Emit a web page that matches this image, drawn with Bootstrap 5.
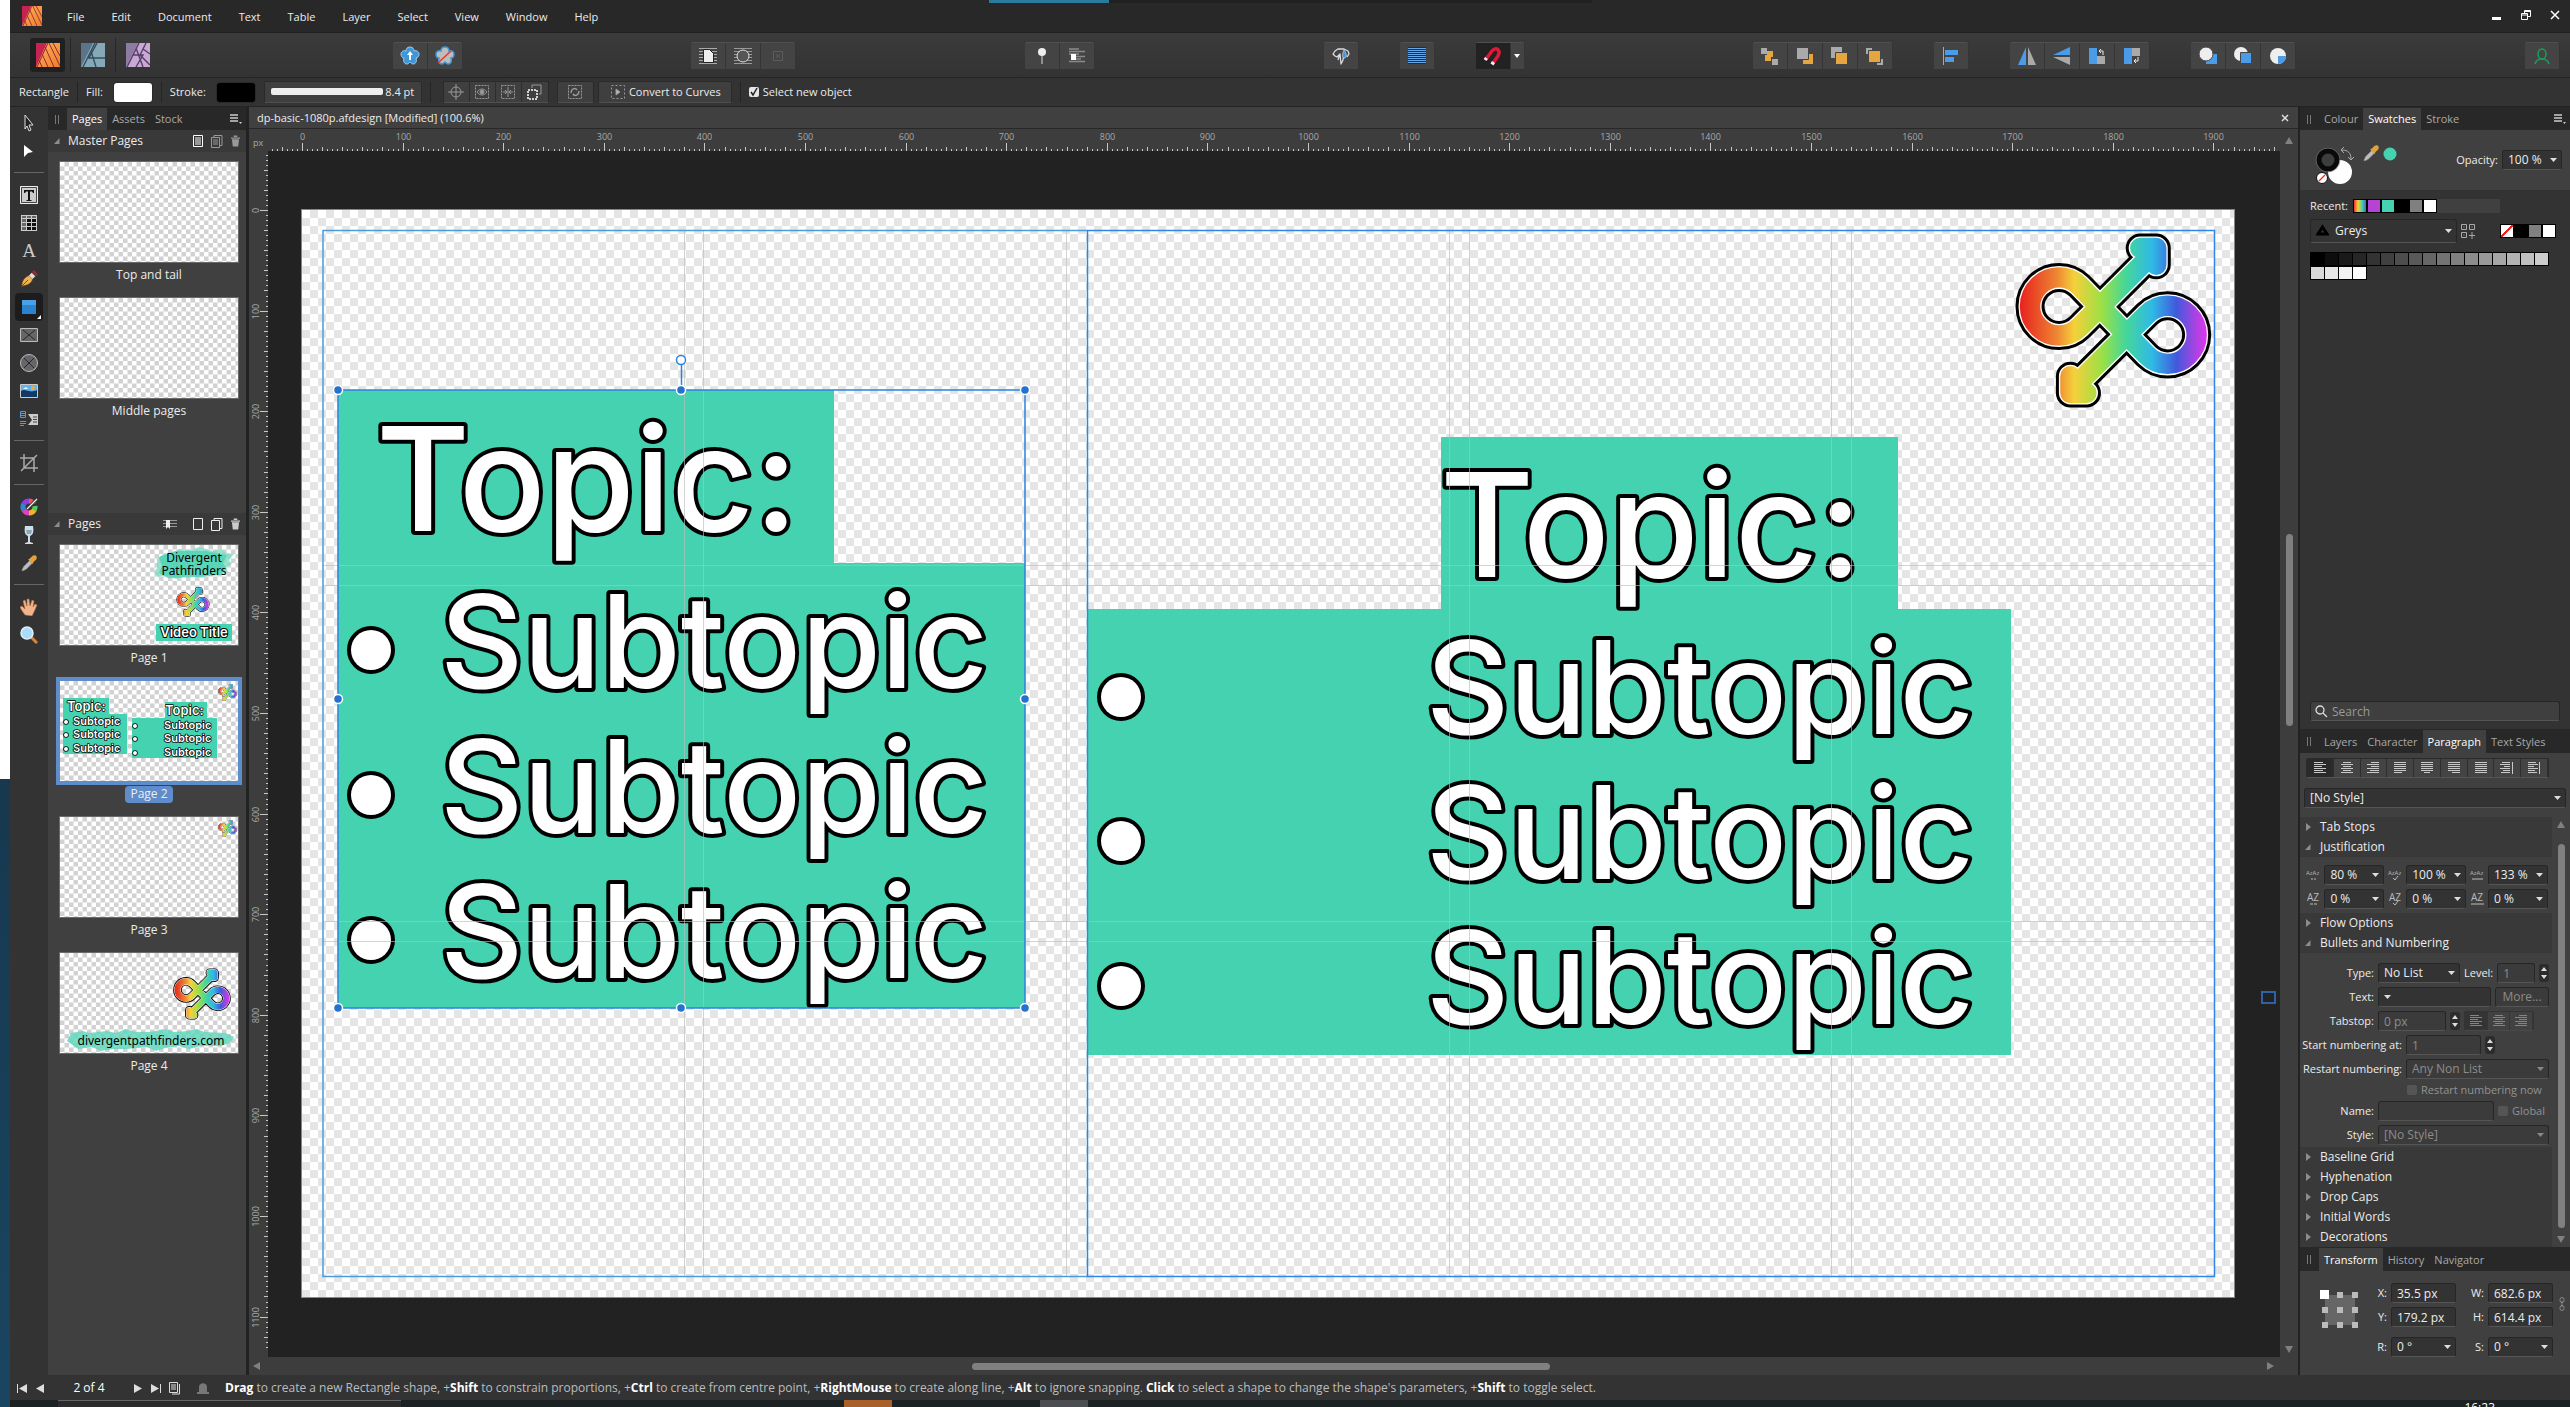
<!DOCTYPE html>
<html lang="en">
<head>
<meta charset="utf-8">
<meta name="viewport" content="width=device-width, initial-scale=1">
<title>dp-basic-1080p.afdesign</title>
<link rel="stylesheet" href="https://cdn.jsdelivr.net/npm/bootstrap@5.3.0/dist/css/bootstrap.min.css">
<style>
:root{--bar:#333;--panel:#404040;--dark:#282828;--edge:#262626;--txt:#ececec;--dim:#a8a8a8;--teal:#45d2b1}
body{font-family:"Open Sans","Noto Sans",sans-serif;font-size:12px;line-height:16px;color:var(--txt);background:#222;overflow:hidden}
svg{display:block;flex:none}
button{font:inherit;color:inherit;background:none;border:0;padding:0;display:flex;align-items:center;justify-content:center}
.desk{width:10px;background:linear-gradient(#fff 779px,#17384f 779px,#1a4560)}
.titlebar{height:33px;background:var(--dark);border-bottom:1px solid #202020;padding:0 10px 0 12px}
.titlebar a{color:var(--txt);text-decoration:none}
.menus{gap:27px;margin-left:25px;font-size:11px;padding-top:2px}
.winbtns{gap:19px;padding-bottom:2px}
.topstrip{top:0;left:989px;width:603px;height:3px;background:#202020}
.topstrip i{display:block;width:120px;height:3px;background:#2a7b9b}
.toolbar{height:45px;background:linear-gradient(#3b3b3b,#333);border-bottom:1px solid #242424;padding:0 11px 0 20px}
.persona{width:35px;height:34px;border-radius:3px}
.persona.on{background:#202020}
.vsep{width:1px;height:34px;background:#262626;margin:0 4px 0 5px}
.gap42{width:42px}
.tgroup{background:#444;border-top:1px solid #505050;border-radius:2px;height:27px;gap:1px}
.tgroup button{width:34px;height:26px;background:#444;box-shadow:1px 0 0 #353535}
.tgroup .narrow{width:13px}
.tgroup .held{background:#222}
.ctx{height:29px;background:var(--bar);border-bottom:1px solid #242424;padding:0 9px;font-size:11px}
.csep{width:1px;height:20px;background:#242424}
.chip{width:38px;height:19px;border-radius:3px;box-shadow:0 0 0 1px #2a2a2a;margin:0 9px 0 11px}
.cgroup{height:22px;background:#3f3f3f;border:1px solid #2a2a2a;border-bottom-color:#505050;border-radius:2px}
.cgroup button{width:26px;border-right:1px solid #2e2e2e}
.cgroup button:last-child{border-right:0}
.strokebox{width:158px;gap:2px}
.cyc{width:37px}.cyc button{width:35px}
.conv{width:134px;gap:2px}
input[type=checkbox].tick{appearance:none;width:10px;height:10px;background:#555;border-radius:2px;margin:0;flex:none}
input[type=checkbox].tick:checked{background:#e6e6e6}
.tickbox{position:relative}
.tickbox svg{position:absolute;left:1px;top:0;pointer-events:none}
.tools{width:38px;background:var(--bar);padding-top:2px}
.tools button{height:28px;width:28px;border-radius:4px}
.tools button.on{background:#1c1c1c;position:relative}
.tools hr{width:30px;margin:7px 0 8px;border:0;border-top:1px solid #666;opacity:1}
.side{width:198px;background:var(--panel)}
.tabsrow{height:23px;background:var(--dark);padding:1px 4px 0 7px;color:var(--dim);font-size:11px}
.tabsrow.tall{height:24px}
.tabsrow .grip{width:4px;height:9px;border-left:1px solid #777;border-right:1px solid #777;margin-right:8px}
.tabsrow button{padding:0 5px;height:22px}
.tabsrow.tall button{height:23px}
.tabsrow button.on{background:var(--panel);color:#fff}
.phead{height:22px;background:#393939;padding:0 6px 0 6px}
.pagelist{display:flex;flex-direction:column;gap:13px;padding:9px 0 0 4px}
.masters{height:361px}
.thumb{width:180px;height:102px;border:1px solid #6a6a6a}
.pg{margin:0 auto;text-align:center;width:186px}
.pg figcaption{height:17px;line-height:16px;margin-top:4px;font-size:12px}
.pg.chosen .thumb{border-color:#5f8ccb;box-shadow:0 0 0 3px #5f8ccb}
.pg.chosen figcaption span{background:#5f8ccb;border-radius:4px;padding:0 5px 1px;display:inline-block}
.docarea{background:#3d3d3d;margin:0 2px 0 3px;min-width:0}
.doctab{height:22px;background:#404040;border-bottom:1px solid #282828;padding:0 9px 0 8px;font-size:11px}
.viewport{background:#222;overflow:hidden}
.artboard{position:absolute;left:34px;top:59px}
.offpage{position:absolute;right:4px;top:840px;width:15px;height:13px;border:2px solid #2b62a8}
.hruler{height:22px;overflow:hidden}
.vruler{width:19px;overflow:hidden}
.ruler text{fill:#a9a9a9;font-size:9px;font-family:"Open Sans",sans-serif}
.ruler path{stroke:#c8c8c8;fill:none}
.vscroll{width:18px}
.hscroll{height:18px}
.thumbbar{background:#808080;border-radius:4px}
.right{width:270px;background:var(--panel)}
.right label,.recent{font-size:11px}
.fld,.pick{background-color:#333;border:1px solid #262626;border-bottom-color:#555;border-radius:3px;color:var(--txt);font:inherit;height:20px;padding:0 5px;min-width:0;width:100%}
.fld:disabled,.pick:disabled{color:#8c8c8c;background-color:#3b3b3b;opacity:1}
.fld::placeholder{color:#9a9a9a;opacity:1}
.pick{appearance:none;background-repeat:no-repeat;background-position:right 4px center;background-size:7px 4px;background-image:url("data:image/svg+xml,%3Csvg xmlns='http://www.w3.org/2000/svg' viewBox='0 0 7 4'%3E%3Cpath d='M0 0h7L3.5 4z' fill='%23ddd'/%3E%3C/svg%3E")}
.pick:disabled{background-image:url("data:image/svg+xml,%3Csvg xmlns='http://www.w3.org/2000/svg' viewBox='0 0 7 4'%3E%3Cpath d='M0 0h7L3.5 4z' fill='%23888'/%3E%3C/svg%3E")}
.w60{width:60px}.w65{width:65px}
.swarea{background:var(--bar);padding:8px 10px 0}
.sw{width:14px;height:14px;border:1px solid #000;flex:none}
.swgrid{width:239px;padding-left:1px;margin-top:8px}
.swgrid .sw{margin-left:-1px;width:15px}
.recentrow{width:147px;background:#404040;margin-right:60px}
.agroup{border:1px solid #2a2a2a;border-bottom-color:#555;border-radius:2px;height:20px;width:243px}
.agroup.main{margin:5px 0 0 6px}
.agroup button{flex:1;border-right:1px solid #2e2e2e;background:#444}
.agroup button.on{background:#2a2a2a}
.stylerow{padding:10px 4px 9px}
.sec{height:20px;background:#393939;padding-left:5px;width:100%;justify-content:flex-start}
.sec svg{margin-right:9px}
.form-line{height:24px;gap:4px;padding-right:3px}
.lb{width:74px;text-align:right;flex:none}
.lb2{width:102px;text-align:right;flex:none;white-space:nowrap}
.lx{width:27px;text-align:right}.lw{width:24px;text-align:right}
.spin{width:10px;height:18px;flex:none;background:#2c2c2c;border-radius:3px}
.muted{color:#929292}
.status{height:25px;background:var(--bar);color:#bdbdbd;padding:1px 0 0 7px}
.status b{color:#fff}
.taskbar{height:7px;background:#1c2124;overflow:hidden}
</style>
</head>
<body class="vh-100 d-flex">
<svg width="0" height="0" class="position-absolute">
 <defs>
  <linearGradient id="rb" gradientUnits="userSpaceOnUse" x1="90" y1="0" x2="648" y2="0"><stop offset="0" stop-color="#e8221f"/><stop offset=".2" stop-color="#ee8733"/><stop offset=".29" stop-color="#f5d03a"/><stop offset=".44" stop-color="#9be046"/><stop offset=".57" stop-color="#45d69b"/><stop offset=".71" stop-color="#2fb9e6"/><stop offset=".84" stop-color="#4159dd"/><stop offset=".92" stop-color="#9448e0"/><stop offset="1" stop-color="#e035ec"/></linearGradient>
  <path id="knot" d="M450 98H498V148M498 98V105L268.5 334.5A87 87 0 1 1 268.5 211.5L470.5 419.5A87 87 0 1 0 470.5 296.5L241 525V532M289 532H241V482"/>
  <symbol id="logo" viewBox="75 50 590 530"><g fill="none" stroke-linecap="round" stroke-linejoin="round"><use href="#knot" stroke="#000" stroke-width="87"/><use href="#knot" stroke="#fff" stroke-width="69"/><use href="#knot" stroke="url(#rb)" stroke-width="61"/></g></symbol>
  <pattern id="chk" width="16" height="16" patternUnits="userSpaceOnUse"><path fill="#fff" d="M0 0h16v16H0z"/><path fill="#e5e5e5" d="M8 0h8v8H8zM0 8h8v8H0z"/></pattern>
  <pattern id="chs" width="9" height="9" patternUnits="userSpaceOnUse"><path fill="#fff" d="M0 0h9v9H0z"/><path fill="#d2d2d2" d="M4.500 0H9v4.500H4.500zM0 4.500h4.500V9H0z"/></pattern>
  <linearGradient id="og" x1="0" y1="0" x2="1" y2="1"><stop stop-color="#ffb35c"/><stop offset="1" stop-color="#f07c2c"/></linearGradient>
  <symbol id="pub" viewBox="0 0 24 24"><path fill="url(#og)" d="M0 0h24v24H0z"/><path fill="#c4244f" d="M0 0h11L0 24z"/><path stroke="#8e2b33" fill="none" d="M9 4l9 20M6 11l6 13M13 0l11 23M17 0l7 13M3 17l3 7M12 0L1 24"/></symbol>
  <symbol id="des" viewBox="0 0 24 24"><path fill="#86a9b8" d="M0 0h24v24H0z"/><path fill="#5a7489" d="M0 0h12L0 24z"/><path stroke="#334f60" stroke-width="1.4" fill="none" d="M14 0L2 24M10 8l5 16M24 15H7M16 0L8 15"/></symbol>
  <symbol id="pho" viewBox="0 0 24 24"><path fill="#c9a8d2" d="M0 0h24v24H0z"/><path fill="#8d7ba3" d="M0 0h12L0 24z"/><path stroke="#55406b" stroke-width="1.4" fill="none" d="M13 0L1 24M7 12h10l-7 12M10 5l7 19M20 0l-6 12 10 10M17 6l7 5"/></symbol>
  <symbol id="flower" viewBox="0 0 20 20"><path d="M10 1c3 0 4 2 4 4 3-1 5 1 5 3s-1 4-3 4c1 3 0 6-3 6-1 0-2-1-3-2-1 1-2 2-3 2-3 0-4-3-3-6-2 0-3-2-3-4s2-4 5-3c0-2 1-4 4-4z"/></symbol>
  <symbol id="pen" viewBox="0 0 20 20"><path fill="#f0b352" stroke="#6e4415" stroke-width=".7" d="M2 18c0-6 3-10 8-12l4 4c-1 5-6 7-12 8z"/><path stroke="#6e4415" d="M2 18l7-7"/><path fill="#ddd" d="M10 6l3-3 4 4-3 3z"/><path fill="#8d2f2a" d="M13 2l3-2 4 5-2 2z"/></symbol>
  <symbol id="dropper" viewBox="0 0 20 20"><path fill="#bdbdbd" stroke="#777" stroke-width=".6" d="M2 18l2-4 7-7 3 3-7 7-4 2z"/><path fill="#e3a33c" d="M9 6l2-1 3-3c3-2 6 1 4 4l-3 3-1 2z"/></symbol>
  <symbol id="trash" viewBox="0 0 10 12"><path fill="currentColor" d="M0 2h10v1.500H0zM3 0h4v1.500H3zM1 4h8l-1 8H2z"/></symbol>
  <symbol id="burger" viewBox="0 0 12 10"><path stroke="#ccc" stroke-width="1.500" d="M0 1h8M0 4h8M0 7h8"/><path fill="#ccc" d="M9 8h3l-1.500 2z"/></symbol>
  <symbol id="open" viewBox="0 0 6 8"><path fill="#8d8d8d" d="M5.500 1v6H0z"/></symbol>
  <symbol id="shut" viewBox="0 0 6 8"><path fill="#8d8d8d" d="M1 0l5 4-5 4z"/></symbol>
  <symbol id="spn" viewBox="0 0 10 18"><path fill="#ddd" d="M2 7l3-4 3 4zM2 11h6l-3 4z"/></symbol>
  <symbol id="al" viewBox="0 0 14 12"><path stroke="#c9c9c9" d="M1 .5h9M1 2.500h12M1 4.500h8M1 6.500h12M1 8.500h9M1 10.500h12"/></symbol>
  <symbol id="ac" viewBox="0 0 14 12"><path stroke="#c9c9c9" d="M3 .5h8M1 2.500h12M3 4.500h8M1 6.500h12M3 8.500h8M1 10.500h12"/></symbol>
  <symbol id="ar" viewBox="0 0 14 12"><path stroke="#c9c9c9" d="M5 .5h8M1 2.500h12M5 4.500h8M1 6.500h12M4 8.500h9M1 10.500h12"/></symbol>
  <symbol id="aj" viewBox="0 0 14 12"><path stroke="#c9c9c9" d="M1 .5h12M1 2.500h12M1 4.500h12M1 6.500h12M1 8.500h12M1 10.500h12"/></symbol>
  <symbol id="aj1" viewBox="0 0 14 12"><path stroke="#c9c9c9" d="M1 .5h12M1 2.500h12M1 4.500h12M1 6.500h12M1 8.500h12M1 10.500h8"/></symbol>
  <symbol id="aj2" viewBox="0 0 14 12"><path stroke="#c9c9c9" d="M1 .5h12M1 2.500h12M1 4.500h12M1 6.500h12M1 8.500h12M4 10.500h6"/></symbol>
  <symbol id="aj3" viewBox="0 0 14 12"><path stroke="#c9c9c9" d="M1 .5h12M1 2.500h12M1 4.500h12M1 6.500h12M1 8.500h12M5 10.500h8"/></symbol>
  <symbol id="ax" viewBox="0 0 14 12"><path stroke="#c9c9c9" d="M2 .5h8M0 2.500h10M4 4.500h6M0 6.500h10M3 8.500h7M1 10.500h9M12.500 0v12"/></symbol>
  <symbol id="ay" viewBox="0 0 14 12"><path stroke="#c9c9c9" d="M1 .5h8M1 2.500h10M1 4.500h6M1 6.500h10M1 8.500h7M1 10.500h9M12.500 0v12"/></symbol>
 </defs>
</svg>

<div class="desk flex-shrink-0"></div>
<div class="d-flex flex-column flex-grow-1 overflow-hidden">
 <div class="position-absolute topstrip"><i></i></div>
 <header class="titlebar d-flex align-items-center flex-shrink-0">
  <svg width="20" height="20"><use href="#pub"/></svg>
  <nav class="d-flex menus"><a href="#">File</a><a href="#">Edit</a><a href="#">Document</a><a href="#">Text</a><a href="#">Table</a><a href="#">Layer</a><a href="#">Select</a><a href="#">View</a><a href="#">Window</a><a href="#">Help</a></nav>
  <div class="d-flex ms-auto winbtns">
   <button aria-label="Minimise"><svg width="10" height="12"><path fill="#fff" d="M0 8h9v3H0z"/></svg></button>
   <button aria-label="Restore"><svg width="10" height="10" fill="none" stroke="#fff"><path d="M.5 3.500h6v6h-6zM.5 5h6M3.500 3V.5h6v6H7M3.500 1.500h6"/></svg></button>
   <button aria-label="Close"><svg width="10" height="10" stroke="#fff" stroke-width="1.500"><path d="M1 1l8 8M9 1l-8 8"/></svg></button>
  </div>
 </header>

 <div class="toolbar d-flex align-items-center flex-shrink-0">
  <button class="persona on" aria-label="Publisher"><svg width="24" height="24"><use href="#pub"/></svg></button><span class="vsep"></span>
  <button class="persona" aria-label="Designer"><svg width="24" height="24"><use href="#des"/></svg></button><span class="vsep"></span>
  <button class="persona me-2" aria-label="Photo"><svg width="24" height="24"><use href="#pho"/></svg></button>
  <span class="flex-fill"></span>
  <div class="tgroup d-flex"><button aria-label="Synchronise defaults"><svg width="20" height="20"><use href="#flower" fill="#3d97d8" stroke="#9ccdf0"/><path fill="#fff" d="M10 5l3 4h-2v5H9V9H7z"/></svg></button><button aria-label="Revert defaults"><svg width="20" height="20"><use href="#flower" fill="#bdbdbd" stroke="#3d97d8" stroke-width="1.500"/><path stroke="#e33" stroke-width="1.500" d="M3 17L16 5"/></svg></button></div>
  <span class="flex-fill"></span>
  <div class="tgroup d-flex"><button aria-label="Wrap"><svg width="18" height="18"><path stroke="#aaa" d="M0 1.500h18M0 4.500h18M0 7.500h18M0 10.500h18M0 13.500h18M0 16.500h18"/><path fill="#eee" stroke="#222" d="M4.500 2.500h6l4 4v9h-10z"/></svg></button><button aria-label="Wrap outline"><svg width="18" height="18"><path stroke="#999" d="M0 1.500h18M0 4.500h18M0 7.500h18M0 10.500h18M0 13.500h18M0 16.500h18"/><circle cx="9" cy="9" r="6" fill="#555" stroke="#ddd"/></svg></button><button aria-label="Wrap off" disabled><svg width="18" height="18" fill="none" stroke="#5c5c5c"><path d="M4.500 4.500h9v9h-9zM7 7l4 4M11 7l-4 4"/></svg></button></div>
  <span class="flex-fill"></span>
  <div class="tgroup d-flex"><button aria-label="Pin"><svg width="10" height="16"><circle cx="5" cy="4" r="4" fill="#eee"/><path stroke="#ddd" d="M5 7v9"/></svg></button><button aria-label="Float"><svg width="18" height="16"><path stroke="#8a8a8a" stroke-width="1.300" d="M1 1h10M1 3.500h16M1 6h10M8 8.500h9M8 11h5M1 13.500h16"/><path fill="#fff" d="M3 6h5v6H3z"/></svg></button></div>
  <span class="flex-fill"></span>
  <div class="tgroup d-flex"><button aria-label="Preview"><svg width="18" height="18" fill="none"><path stroke="#ddd" stroke-width="1.300" stroke-linejoin="round" d="M3 9l-2-2 2-3 3-2h6l4 2 1 3-2 3M3 9l2 1 3-3 1 10 2-4 1-6M8 7l-2 6"/><path fill="#3d97e8" stroke="#fff" stroke-width=".5" d="M12 3c3 4 3 7 1 8s-4-2-1-8z"/></svg></button></div>
  <span class="gap42"></span>
  <div class="tgroup d-flex"><button aria-label="Baseline grid"><svg width="18" height="18"><path fill="#1f2e40" d="M0 0h18v17H0z"/><path stroke="#66a6e6" stroke-width="1.200" d="M0 1.500h18M0 3.500h18M0 5.500h18M0 7.500h18M0 9.500h18M0 11.500h18M0 13.500h18M0 15.500h18"/></svg></button></div>
  <span class="gap42"></span>
  <div class="tgroup d-flex"><button class="held" aria-label="Snapping"><svg width="20" height="20" fill="none"><path stroke="#e0193b" stroke-width="3.500" d="M3 13L9 5c4-5 9-1 6 5l-5 7"/><path stroke="#eee" stroke-width="3.500" d="M2 14l1.500-2M9 18.500l1.500-2.500"/></svg></button><button class="narrow" aria-label="Snapping options"><svg width="6" height="4"><path fill="#fff" d="M0 0h6L3 4z"/></svg></button></div>
  <span class="flex-fill"></span>
  <div class="tgroup d-flex"><button aria-label="Back"><svg width="18" height="18"><path fill="#aaa" d="M0 1h6v6H0zM11 12h6v6h-6z"/><path fill="#e5a540" d="M6 4h6v6H6zM4 8h6v6H4z"/></svg></button><button aria-label="Backward"><svg width="18" height="18"><path fill="#e5a540" d="M7 7h10v10H7z"/><path fill="#aaa" stroke="#444" d="M.5.500h12v12H.5z"/></svg></button><button aria-label="Forward"><svg width="18" height="18"><path fill="#aaa" d="M0 0h11v11H0z"/><path fill="#e5a540" stroke="#444" d="M4.500 5.500h12v12h-12z"/></svg></button><button aria-label="Front"><svg width="18" height="18"><path fill="#aaa" d="M0 1h6v6H0zM11 12h6v6h-6z"/><path fill="#e5a540" stroke="#444" d="M2.500 3.500h12v12h-12z"/></svg></button></div>
  <span class="gap42"></span>
  <div class="tgroup d-flex"><button aria-label="Align"><svg width="16" height="18"><path fill="#aaa" d="M0 0h1v18H0z"/><path fill="#4a9be8" d="M2 3h13v5H2zM2 10h9v5H2z"/></svg></button></div>
  <span class="gap42"></span>
  <div class="tgroup d-flex"><button aria-label="Flip horizontal"><svg width="18" height="18"><path fill="#4a9be8" d="M8 0v18H0z"/><path fill="#aaa" d="M10 0l8 18h-8z"/></svg></button><button aria-label="Flip vertical"><svg width="18" height="18"><path fill="#4a9be8" d="M17 0v8H0z"/><path fill="#aaa" d="M17 18v-8H0z"/></svg></button><button aria-label="Rotate left"><svg width="18" height="18"><path fill="#4a9be8" d="M1 1h8v16H1z"/><path fill="#aaa" d="M9 9h8v8H9z"/><path stroke="#eee" fill="none" d="M11 4h4v4M13 2l-2 2 2 2"/></svg></button><button aria-label="Rotate right"><svg width="18" height="18"><path fill="#4a9be8" d="M1 1h8v16H1z"/><path fill="#aaa" d="M9 1h8v8H9z"/><path stroke="#eee" fill="none" d="M15 10v4h-4M13 12l-2 2 2 2"/></svg></button></div>
  <span class="gap42"></span>
  <div class="tgroup d-flex"><button aria-label="Add"><svg width="18" height="18"><path fill="#4a9be8" d="M7 7h11v10H7z"/><circle cx="7" cy="7" r="7" fill="#eee" stroke="#444"/></svg></button><button aria-label="Subtract"><svg width="18" height="18"><circle cx="7" cy="7" r="7" fill="#eee"/><path fill="#4a9be8" stroke="#444" d="M6.500 5.500h11v11h-11z"/></svg></button><button aria-label="Intersect"><svg width="18" height="18"><circle cx="9" cy="9" r="8" fill="#eee"/><path fill="#4a9be8" d="M9 9h8c0 5-4 8-8 8z"/></svg></button></div>
  <span class="flex-fill"></span>
  <div class="tgroup d-flex"><button aria-label="Account"><svg width="16" height="16" fill="none" stroke="#12a35a" stroke-width="1.500"><ellipse cx="8" cy="6" rx="4" ry="5"/><path d="M1 16c1-4 4-5 7-5s6 1 7 5"/></svg></button></div>
 </div>

 <div class="ctx d-flex align-items-center flex-shrink-0">
  <span>Rectangle</span><span class="csep mx-2"></span><span>Fill:</span><button class="chip bg-white" aria-label="Fill"></button><span class="csep me-2"></span><span>Stroke:</span><button class="chip bg-black" aria-label="Stroke"></button>
  <button class="cgroup strokebox" aria-label="Stroke width"><svg width="112" height="8"><rect width="112" height="7" rx="2" fill="#eee"/></svg><span class="text-nowrap">8.4 pt</span></button><span class="csep mx-2"></span>
  <div class="cgroup d-flex ms-1"><button aria-label="Target"><svg width="16" height="16" fill="none" stroke="#999"><circle cx="8" cy="8" r="5"/><path d="M8 0v16M0 8h16"/></svg></button><button aria-label="Visibility"><svg width="16" height="16" fill="none" stroke="#999"><path stroke-dasharray="2 1" d="M1.500 1.500h13v13h-13z"/><path d="M3 8c3-4 7-4 10 0-3 4-7 4-10 0z"/><circle cx="8" cy="8" r="2" fill="#999"/></svg></button><button aria-label="Mirror"><svg width="16" height="16" fill="none" stroke="#999"><path stroke-dasharray="2 1" d="M1.500 1.500h13v13h-13z"/><path d="M8 3v10M3 8h3M10 8h3M5 6l2 2-2 2M11 6L9 8l2 2"/></svg></button><button aria-label="Transform separately"><svg width="18" height="18" fill="none"><path stroke="#fff" stroke-width="1.500" stroke-dasharray="2 1" d="M2 7h9v9H2z"/><path stroke="#999" d="M6 5V2h9v9h-2"/></svg></button></div>
  <div class="cgroup d-flex ms-2 cyc"><button aria-label="Cycle"><svg width="16" height="16" fill="none" stroke="#999"><path stroke-dasharray="2 1" d="M1.500 1.500h13v13h-13z"/><path stroke-width="1.500" d="M4 9c0-4 4-6 6-3M12 7c0 4-4 6-6 3"/></svg></button></div>
  <button class="cgroup conv ms-1"><svg width="18" height="16" fill="none" stroke="#999"><path stroke-dasharray="2 2" d="M2.500 1.500h13v13h-13z"/><path fill="#bbb" d="M7 5l4 3-4 3z"/></svg><span class="text-nowrap">Convert to Curves</span></button><span class="csep mx-2"></span>
  <span class="tickbox d-flex me-1"><input class="tick" type="checkbox" id="sno" checked><svg width="9" height="10"><path d="M1 5l2 3 4-7" fill="none" stroke="#222" stroke-width="1.500"/></svg></span><label for="sno">Select new object</label>
 </div>

 <div class="d-flex flex-grow-1 overflow-hidden">
  <nav class="tools d-flex flex-column align-items-center flex-shrink-0">
   <button aria-label="Move"><svg width="12" height="18"><path fill="#222" stroke="#ddd" d="M2 1l8 10H6l2 5-2 1-2-5-2 3z"/></svg></button>
   <button aria-label="Node"><svg width="12" height="14"><path fill="#fff" d="M1 1l9 7-5 1-4 4z"/></svg></button><hr>
   <button aria-label="Frame text"><svg width="18" height="18"><path fill="#ccc" stroke="#eee" d="M.5.500h17v17H.5z"/><path fill="none" stroke="#444" d="M1.500 1.500h15v15h-15z"/><path fill="#111" d="M4 4h10v3h-1l-1-1.500h-2V14h1.500v1h-5v-1H8V5.500H6L5 7H4z"/></svg></button>
   <button aria-label="Table"><svg width="16" height="16"><path fill="#ccc" d="M0 0h16v16H0z"/><path fill="#111" d="M6 4h4v3H6zM11 4h4v3h-4zM6 8h4v3H6zM11 8h4v3h-4zM6 12h4v3H6zM11 12h4v3h-4z"/><path fill="#666" d="M1 1h4v2H1zM6 1h4v2H6zM11 1h4v2h-4zM1 4h4v3H1zM1 8h4v3H1zM1 12h4v3H1z"/></svg></button>
   <button aria-label="Artistic text"><svg width="20" height="24"><text x="10" y="18" text-anchor="middle" font-family="Liberation Serif,serif" font-size="19" fill="#ccc">A</text></svg></button>
   <button aria-label="Pen"><svg width="18" height="18"><use href="#pen"/></svg></button>
   <button class="on" aria-label="Rectangle"><svg width="28" height="28"><path fill="#2b82cf" d="M7 7h14v14H7z"/><path fill="#4a9fe6" d="M7 7h14v5H7z"/><path fill="#fff" d="M26 22v4h-4z"/></svg></button>
   <button aria-label="Picture frame"><svg width="18" height="14"><path fill="#666" stroke="#bbb" d="M.5.500h17v13H.5z"/><path stroke="#24243a" d="M3 2l12 10M15 2L3 12"/></svg></button>
   <button aria-label="Ellipse frame"><svg width="18" height="18"><circle cx="9" cy="9" r="8.500" fill="#666" stroke="#bbb"/><path stroke="#24243a" d="M4 4l10 10M14 4L4 14"/></svg></button>
   <button aria-label="Place image"><svg width="18" height="14"><path fill="#62b4ef" stroke="#ccc" d="M.5.500h17v13H.5z"/><path fill="#123a63" d="M1 7c5-3 8 3 16-1v7H1z"/><circle cx="13" cy="4" r="2" fill="#f2a93b"/><path fill="#fff" d="M3 5l3-2 2 2z"/></svg></button>
   <button aria-label="Data merge"><svg width="18" height="16"><path fill="none" stroke="#4a9be8" d="M.5.500h5v6h-5zM1 2.500h4M1 4.500h4M0 10.500h6M0 12.500h6M0 14.500h4"/><path fill="#ccc" d="M8 3h10v11H8l4-5z"/><path stroke="#444" d="M13 6h4M13 8.500h4M13 11h4"/></svg></button><hr>
   <button aria-label="Vector crop"><svg width="18" height="18" fill="none" stroke="#aaa" stroke-width="1.500"><path d="M4 0v14h14M0 4h14v14M1 17L17 1"/></svg></button><hr>
   <button aria-label="Fill"><svg width="18" height="18" fill="none" stroke-width="5"><path stroke="#e55" d="M9 3a6 6 0 0 1 5 3"/><path stroke="#8d3fe0" d="M3.800 6A6 6 0 0 1 9 3"/><path stroke="#38c" d="M3.800 12a6 6 0 0 1 0-6"/><path stroke="#e040c0" d="M9 15a6 6 0 0 1-5.200-3"/><path stroke="#f0b030" d="M14.500 11.500A6 6 0 0 1 9 15"/><path stroke="#5c5" d="M15 8a6 6 0 0 1-1 4"/><path stroke="#333" stroke-width="3" d="M8 10L18 0"/><path stroke="#eee" stroke-width="1.300" d="M7 11L17 1"/></svg></button>
   <button aria-label="Transparency"><svg width="12" height="18"><path fill="#cfdcec" d="M2 0h8c1 6 0 9-3 10v6l3 1v1H2v-1l3-1v-6C2 9 1 6 2 0z"/><path fill="#8aa" d="M3 4h6l-1 4H4z"/></svg></button>
   <button aria-label="Colour picker"><svg width="18" height="18"><use href="#dropper"/></svg></button><hr>
   <button aria-label="View"><svg width="18" height="18"><path fill="#f0b48c" stroke="#a8643c" stroke-width=".6" d="M5 17c-2-3-4-5-5-8l2-1 3 3L3 3l2-1 2 6V1h2l1 7 2-6 2 1-1 6 2-3 2 1-3 7-2 4z"/></svg></button>
   <button aria-label="Zoom"><svg width="18" height="18"><path stroke="#d9843a" stroke-width="3" d="M11 11l6 6"/><circle cx="7" cy="7" r="6" fill="#a8dcfa" stroke="#dfeffa" stroke-width="1.500"/></svg></button>
  </nav>

  <aside class="side flex-shrink-0">
   <div class="tabsrow d-flex align-items-center"><span class="grip"></span><button class="on">Pages</button><button>Assets</button><button>Stock</button><svg class="ms-auto" width="12" height="10"><use href="#burger"/></svg></div>
   <div class="phead d-flex align-items-center"><svg width="6" height="8"><use href="#open"/></svg><span class="ms-2 me-auto">Master Pages</span><svg width="10" height="12" fill="#333" stroke="#fff"><path d="M.5.500h9v11h-9zM2 3h6M2 5h6M2 7h6M2 9h6"/></svg><svg class="ms-2 me-2" width="12" height="13" fill="none" stroke="#999"><path d="M.5 2.500h8v10h-8zM3 2V.5h8v10H9M2 5h5M2 7h5M2 9h5"/></svg><svg width="9" height="12" color="#999"><use href="#trash"/></svg></div>
   <div class="pagelist masters">
    <figure class="pg"><svg class="thumb mx-auto"><rect width="180" height="102" fill="url(#chs)"/></svg><figcaption>Top and tail</figcaption></figure>
    <figure class="pg"><svg class="thumb mx-auto"><rect width="180" height="102" fill="url(#chs)"/></svg><figcaption>Middle pages</figcaption></figure>
   </div>
   <div class="phead d-flex align-items-center"><svg width="6" height="8"><use href="#open"/></svg><span class="ms-2 me-auto">Pages</span><svg width="14" height="10"><path stroke="#999" d="M0 1.500h14M0 4.500h14M0 7.500h14"/><path fill="#eee" d="M3 1h4v9L5 8l-2 2z"/></svg><svg class="ms-3" width="10" height="12" fill="none" stroke="#eee"><path d="M.5.500h9v11h-9z"/></svg><svg class="ms-2 me-2" width="12" height="13" fill="none" stroke="#eee"><path d="M.5 2.500h8v10h-8zM3 2V.5h8v10H9"/></svg><svg width="9" height="12" color="#ccc"><use href="#trash"/></svg></div>
   <div class="pagelist">
    <figure class="pg"><svg class="thumb mx-auto"><rect width="180" height="102" fill="url(#chs)"/><path fill="#7fdcc6" opacity=".8" d="M97 14l8-6 4 2 10-6 12 1 8-3 14 4 8-2 5 4 8 1-5 6 3 4-6 3 2 5-8 3-10-1-8 4-14-3-12 4-9-4-9 2-4-5 3-4z"/><path fill="#45d2b1" opacity=".75" d="M99 12l16-6 30 0 22 4-4 8 3 4-6 8-22 2-30 1-9-5 3-7z"/><g font-family="Noto Sans" font-size="12" text-anchor="middle"><text x="134" y="17">Divergent</text><text x="134" y="30">Pathfinders</text></g><use href="#logo" x="116" y="42" width="34" height="30"/><rect x="96" y="79" width="76" height="17" fill="#45d2b1"/><text x="134" y="92" text-anchor="middle" font-family="Inter" font-weight="600" font-size="13" fill="#fff" stroke="#000" stroke-width="2" stroke-linejoin="round" paint-order="stroke">Video Title</text></svg><figcaption>Page 1</figcaption></figure>
    <figure class="pg chosen"><svg class="thumb mx-auto"><rect width="180" height="102" fill="url(#chs)"/><path fill="#45d2b1" d="M3 17h46v16h18v40H3zM105 21h42v16h10v40H72V37h33z"/><g font-family="Inter" font-weight="600" fill="#fff" stroke="#000" stroke-width="1.500" stroke-linejoin="round" paint-order="stroke"><g font-size="13"><text x="7" y="30">Topic:</text><text x="105" y="34">Topic:</text></g><g font-size="11"><text x="13" y="44">Subtopic</text><text x="13" y="57">Subtopic</text><text x="13" y="71">Subtopic</text><text x="104" y="48">Subtopic</text><text x="104" y="61">Subtopic</text><text x="104" y="75">Subtopic</text></g><circle cx="6" cy="41" r="2"/><circle cx="6" cy="54" r="2"/><circle cx="6" cy="68" r="2"/><circle cx="75" cy="45" r="2"/><circle cx="75" cy="58" r="2"/><circle cx="75" cy="72" r="2"/></g><use href="#logo" x="158" y="3" width="19" height="17"/></svg><figcaption><span>Page 2</span></figcaption></figure>
    <figure class="pg"><svg class="thumb mx-auto"><rect width="180" height="102" fill="url(#chs)"/><use href="#logo" x="158" y="3" width="19" height="17"/></svg><figcaption>Page 3</figcaption></figure>
    <figure class="pg"><svg class="thumb mx-auto"><rect width="180" height="102" fill="url(#chs)"/><use href="#logo" x="113" y="15" width="58" height="52"/><path fill="#62d8bd" opacity=".85" d="M7 88l4-8 12-2 6 2 18-2 9 2 10-4 10 3 14 0 16-3 8 3 14-1 8-2 9 3 20 1 9 4-4 6-9 3-20 0-12 3-10-3-14 2-9 3-9-4-20 2-14 0-12 2-9-4-14 2z"/><text x="91" y="92" text-anchor="middle" font-family="Noto Sans" font-size="12">divergentpathfinders.com</text></svg><figcaption>Page 4</figcaption></figure>
   </div>
  </aside>

  <main class="docarea d-flex flex-column flex-grow-1">
   <div class="doctab d-flex align-items-center flex-shrink-0"><span>dp-basic-1080p.afdesign [Modified] (100.6%)</span><button class="ms-auto" aria-label="Close document"><svg width="8" height="8" stroke="#ddd" stroke-width="1.500"><path d="M1 1l6 6M7 1L1 7"/></svg></button></div>
   <div class="d-flex flex-grow-1 overflow-hidden">
    <div class="flex-grow-1 d-flex flex-column overflow-hidden">
     <svg class="hruler ruler w-100" id="hr"><text x="4" y="17">px</text></svg>
     <div class="d-flex flex-grow-1 overflow-hidden">
      <svg class="vruler ruler h-100" id="vr"></svg>
      <div class="viewport flex-grow-1 position-relative">
       <svg class="artboard" width="1932" height="1087" overflow="visible">
        <rect x="-1" y="-1" width="1934" height="1089" fill="#888"/>
        <rect width="1932" height="1087" fill="url(#chk)"/>
        <path fill="#45d2b1" d="M36 180H532V353H723V798H36zM1139 227H1596V399H1709V845H785V399H1139z"/>
        <g font-family="Inter" font-weight="500" fill="#fff" stroke="#000" stroke-width="8" stroke-linejoin="round" paint-order="stroke">
         <g font-size="144"><text x="74" y="321">Topic:</text><text x="1138" y="367">Topic:</text></g>
         <g font-size="129"><text x="138" y="478">Subtopic</text><text x="138" y="623">Subtopic</text><text x="138" y="768">Subtopic</text><text x="1124" y="524">Subtopic</text><text x="1124" y="669">Subtopic</text><text x="1124" y="814">Subtopic</text></g>
         <circle cx="69" cy="440" r="20"/><circle cx="69" cy="585" r="20"/><circle cx="69" cy="730" r="20"/><circle cx="819" cy="487" r="20"/><circle cx="819" cy="631" r="20"/><circle cx="819" cy="776" r="20"/>
        </g>
        <use href="#logo" x="1713" y="22" width="197" height="177"/>
        <path stroke="#bbb" stroke-opacity=".65" d="M382.500 21v1045M401.500 21v1045M764.500 21v1045M1147.500 21v1045M1167.500 21v1045M1529.500 21v1045M1549.500 21v1045M21 355.500h1891M21 375.500h1891M21 711.500h1891M21 731.500h1891"/>
        <g fill="none"><path stroke="#4b9cdb" stroke-width="1.500" d="M785 20.500H21V1066.500H785"/><path stroke="#2f86e6" stroke-width="1.500" d="M785.500 20.500H1912.500V1066.500H785.500z"/><path stroke="#2b83e0" stroke-width="1.500" d="M36 180H723V798H36zM379.500 154v26"/></g>
        <circle cx="379" cy="150" r="4.500" fill="#fff" stroke="#2b83e0" stroke-width="1.500"/>
        <g fill="#2472cf" stroke="#fff" stroke-width="1.500"><circle cx="36" cy="180" r="4.500"/><circle cx="379" cy="180" r="4.500"/><circle cx="723" cy="180" r="4.500"/><circle cx="36" cy="489" r="4.500"/><circle cx="723" cy="489" r="4.500"/><circle cx="36" cy="798" r="4.500"/><circle cx="379" cy="798" r="4.500"/><circle cx="723" cy="798" r="4.500"/></g>
       </svg>
       <span class="offpage"></span>
      </div>
     </div>
    </div>
    <div class="vscroll d-flex flex-column align-items-center flex-shrink-0 pt-2">
     <svg width="8" height="7"><path fill="#808080" d="M4 0l4 7H0z"/></svg>
     <div class="w-100 flex-grow-1 d-flex flex-column align-items-center"><span style="flex:389"></span><span class="thumbbar" style="width:7px;flex:191"></span><span style="flex:618"></span></div>
     <svg width="8" height="7" class="mb-1"><path fill="#808080" d="M0 0h8L4 7z"/></svg>
    </div>
   </div>
   <div class="hscroll d-flex align-items-center flex-shrink-0 ps-1"><svg width="7" height="8"><path fill="#808080" d="M7 0v8L0 4z"/></svg><span style="flex:713"></span><span class="thumbbar" style="height:7px;flex:578"></span><span style="flex:718"></span><svg width="7" height="8"><path fill="#808080" d="M0 0v8l7-4z"/></svg><span class="me-4"></span></div>
  </main>

  <aside class="right flex-shrink-0 d-flex flex-column">
   <div class="tabsrow d-flex align-items-center flex-shrink-0"><span class="grip"></span><button>Colour</button><button class="on">Swatches</button><button>Stroke</button><svg class="ms-auto" width="12" height="10"><use href="#burger"/></svg></div>
   <div class="d-flex align-items-center flex-shrink-0 pe-2"><svg width="100" height="60"><circle cx="40" cy="42" r="12" fill="#fff"/><circle cx="28" cy="30" r="9" fill="#3d3d3d" stroke="#0a0a0a" stroke-width="5"/><circle cx="28" cy="30" r="12" fill="none" stroke="#777" stroke-width=".6"/><circle cx="22" cy="48" r="5.500" fill="#fff" stroke="#111"/><path stroke="#e22" stroke-width="1.300" d="M19 51l6-6"/><path fill="none" stroke="#aaa" d="M42 20c6 0 9 3 9 9M44 17l-3 3 3 3M48 27l3 3 3-3"/><svg x="62" y="14" width="18" height="18"><use href="#dropper"/></svg><circle cx="90" cy="24" r="6.500" fill="#45d2b1"/></svg><label class="ms-auto me-1" for="op">Opacity:</label><select id="op" class="pick w60"><option>100 %</option></select></div>
   <div class="swarea flex-grow-1 d-flex flex-column">
    <div class="d-flex align-items-center mb-1"><span class="me-auto recent">Recent:</span><div class="d-flex recentrow"><i class="sw" style="background:linear-gradient(90deg,#e33,#f5d03a,#45d69b,#46d)"></i><i class="sw" style="background:#b544d4"></i><i class="sw" style="background:#45d2b1"></i><i class="sw" style="background:#000"></i><i class="sw" style="background:#808080"></i><i class="sw" style="background:#fff"></i></div></div>
    <div class="d-flex align-items-center" style="height:26px"><div class="position-relative" style="width:147px"><select class="pick" style="height:24px;padding-left:24px" aria-label="Palette"><option>Greys</option></select><svg class="position-absolute" style="left:6px;top:5px" width="13" height="13"><path fill="none" stroke="#000" stroke-width="3" d="M6.500 3L11 10H2z"/></svg></div><svg class="ms-1" width="15" height="15" fill="none" stroke="#aaa"><path d="M.5.500h5v5h-5zM8.500.500h5v5h-5zM.5 8.500h5v5h-5zM11 8v7M8 11.500h6M2.500 3h1M10.500 3h1M2.500 11h1"/></svg><div class="d-flex ms-4"><i class="sw" style="background:linear-gradient(135deg,#fff 44%,#e22 44% 56%,#fff 56%)"></i><i class="sw" style="background:#000"></i><i class="sw" style="background:#808080"></i><i class="sw" style="background:#fff"></i></div></div>
    <div class="d-flex flex-wrap swgrid" id="greys"></div>
    <div class="mt-auto position-relative mb-2"><svg class="position-absolute" style="left:5px;top:4px" width="13" height="13" fill="none" stroke="#ddd" stroke-width="1.300"><circle cx="5" cy="5" r="4"/><path d="M8 8l4 4"/></svg><input class="fld" style="padding-left:21px;background:#3f3f3f" type="search" placeholder="Search" aria-label="Search"></div>
   </div>
   <div class="tabsrow tall d-flex align-items-center flex-shrink-0"><span class="grip"></span><button>Layers</button><button>Character</button><button class="on">Paragraph</button><button>Text Styles</button></div>
   <div class="d-flex agroup main flex-shrink-0"><button class="on" aria-label="Left"><svg width="14" height="12"><use href="#al"/></svg></button><button aria-label="Centre"><svg width="14" height="12"><use href="#ac"/></svg></button><button aria-label="Right"><svg width="14" height="12"><use href="#ar"/></svg></button><button aria-label="Justify left"><svg width="14" height="12"><use href="#aj1"/></svg></button><button aria-label="Justify centre"><svg width="14" height="12"><use href="#aj2"/></svg></button><button aria-label="Justify right"><svg width="14" height="12"><use href="#aj3"/></svg></button><button aria-label="Justify all"><svg width="14" height="12"><use href="#aj"/></svg></button><button aria-label="Towards spine"><svg width="14" height="12"><use href="#ax"/></svg></button><button aria-label="Away from spine"><svg width="14" height="12"><use href="#ay"/></svg></button></div>
   <div class="stylerow d-flex flex-shrink-0"><select class="pick" aria-label="Paragraph style"><option>[No Style]</option></select></div>
   <div class="d-flex flex-shrink-0">
    <div style="width:252px">
     <button class="sec"><svg width="6" height="8"><use href="#shut"/></svg>Tab Stops</button>
     <button class="sec"><svg width="6" height="8"><use href="#open"/></svg>Justification</button>
     <div style="padding:6px 4px 2px 6px">
      <div class="d-flex justify-content-between align-items-center" style="height:24px"><svg width="15" height="14"><text y="7" font-size="6" fill="#bbb">AzAz</text><path stroke="#bbb" d="M5 11h2M8 11h2"/></svg><select class="pick w60" aria-label="Min word spacing"><option>80 %</option></select><svg width="15" height="14"><text y="7" font-size="6" fill="#bbb">AzAz</text><path fill="none" stroke="#bbb" d="M5 10l2 2 3-4"/></svg><select class="pick w60" aria-label="Desired word spacing"><option>100 %</option></select><svg width="15" height="14"><text y="7" font-size="6" fill="#bbb">AzAz</text><path stroke="#bbb" d="M2 11h11"/></svg><select class="pick w60" aria-label="Max word spacing"><option>133 %</option></select></div>
      <div class="d-flex justify-content-between align-items-center" style="height:24px"><svg width="15" height="14"><text x="1" y="9" font-size="10" fill="#bbb">AZ</text><path stroke="#bbb" d="M4 12h3M8 12h3"/></svg><select class="pick w60" aria-label="Min letter spacing"><option>0 %</option></select><svg width="15" height="14"><text x="1" y="9" font-size="10" fill="#bbb">AZ</text><path fill="none" stroke="#bbb" d="M5 11l2 2 3-4"/></svg><select class="pick w60" aria-label="Desired letter spacing"><option>0 %</option></select><svg width="15" height="14"><text x="1" y="9" font-size="10" fill="#bbb">AZ</text><path stroke="#bbb" d="M1 12h13"/></svg><select class="pick w60" aria-label="Max letter spacing"><option>0 %</option></select></div>
     </div>
     <button class="sec"><svg width="6" height="8"><use href="#shut"/></svg>Flow Options</button>
     <button class="sec"><svg width="6" height="8"><use href="#open"/></svg>Bullets and Numbering</button>
     <div style="padding-top:8px">
      <div class="d-flex align-items-center form-line"><label class="lb" for="ty">Type:</label><select id="ty" class="pick" style="width:82px"><option>No List</option></select><label for="lv">Level:</label><input id="lv" class="fld flex-fill" style="width:30px" value="1" disabled><button class="spin" aria-label="Step level"><svg width="10" height="18"><use href="#spn"/></svg></button></div>
      <div class="d-flex align-items-center form-line"><label class="lb" for="tx">Text:</label><span class="position-relative" style="width:113px"><input id="tx" class="fld"><svg class="position-absolute" style="left:6px;top:8px" width="7" height="4"><path fill="#ddd" d="M0 0h7L3.500 4z"/></svg></span><button class="fld muted" style="width:54px" disabled>More...</button></div>
      <div class="d-flex align-items-center form-line"><label class="lb" for="ts">Tabstop:</label><input id="ts" class="fld" style="width:68px" value="0 px" disabled><button class="spin" aria-label="Step tabstop"><svg width="10" height="18"><use href="#spn"/></svg></button><div class="agroup d-flex opacity-50" style="width:70px"><button class="on" aria-label="Tab left"><svg width="14" height="12"><use href="#al"/></svg></button><button aria-label="Tab centre"><svg width="14" height="12"><use href="#ac"/></svg></button><button aria-label="Tab right"><svg width="14" height="12"><use href="#ar"/></svg></button></div></div>
      <div class="d-flex align-items-center form-line"><label class="lb2" for="sn">Start numbering at:</label><input id="sn" class="fld" style="width:75px" value="1" disabled><button class="spin" aria-label="Step start"><svg width="10" height="18"><use href="#spn"/></svg></button></div>
      <div class="d-flex align-items-center form-line"><label class="lb2" for="rn">Restart numbering:</label><select id="rn" class="pick flex-fill" style="width:100px" disabled><option>Any Non List</option></select></div>
      <div class="d-flex align-items-center muted text-nowrap" style="height:18px;padding-left:107px"><input class="tick me-1" type="checkbox" id="rnn" disabled><label for="rnn">Restart numbering now</label></div>
      <div class="d-flex align-items-center form-line"><label class="lb" for="nm">Name:</label><input id="nm" class="fld" style="width:116px" disabled><input class="tick" type="checkbox" id="gl" disabled><label class="muted" for="gl">Global</label></div>
      <div class="d-flex align-items-center form-line"><label class="lb" for="st">Style:</label><select id="st" class="pick flex-fill" style="width:100px" disabled><option>[No Style]</option></select></div>
     </div>
     <button class="sec"><svg width="6" height="8"><use href="#shut"/></svg>Baseline Grid</button>
     <button class="sec"><svg width="6" height="8"><use href="#shut"/></svg>Hyphenation</button>
     <button class="sec"><svg width="6" height="8"><use href="#shut"/></svg>Drop Caps</button>
     <button class="sec"><svg width="6" height="8"><use href="#shut"/></svg>Initial Words</button>
     <button class="sec"><svg width="6" height="8"><use href="#shut"/></svg>Decorations</button>
    </div>
    <div class="flex-fill d-flex flex-column align-items-center justify-content-between py-1"><svg width="8" height="7"><path fill="#808080" d="M4 0l4 7H0z"/></svg><span class="thumbbar flex-fill mt-3 mb-2" style="width:7px"></span><svg width="8" height="7"><path fill="#808080" d="M0 0h8L4 7z"/></svg></div>
   </div>
   <div class="tabsrow tall d-flex align-items-center flex-shrink-0"><span class="grip"></span><button class="on">Transform</button><button>History</button><button>Navigator</button></div>
   <div class="d-flex flex-shrink-0" style="height:104px;padding:10px 5px 0 20px">
    <svg width="40" height="50"><path fill="#666" d="M5 14h30v30H5z"/><path fill="#bbb" d="M17 11h6v6h-6zM32 11h6v6h-6zM2 26h6v6H2zM17 26h6v6h-6zM32 26h6v6h-6zM2 41h6v6H2zM17 41h6v6h-6zM32 41h6v6h-6z"/><path fill="#fff" d="M0 9h9v9H0z"/></svg>
    <div class="d-flex flex-column flex-fill">
     <div class="d-flex align-items-center form-line"><label class="lx" for="px">X:</label><input id="px" class="fld w65" value="35.5 px"><label class="lw" for="pw">W:</label><input id="pw" class="fld w65" value="682.6 px"></div>
     <div class="d-flex align-items-center form-line"><label class="lx" for="py">Y:</label><input id="py" class="fld w65" value="179.2 px"><label class="lw" for="ph">H:</label><input id="ph" class="fld w65" value="614.4 px"></div>
     <div class="d-flex align-items-center form-line" style="margin-top:6px"><label class="lx" for="pr">R:</label><select id="pr" class="pick w65"><option>0 °</option></select><label class="lw" for="ps">S:</label><select id="ps" class="pick w65"><option>0 °</option></select></div>
    </div>
    <svg width="6" height="14" class="mt-3" fill="none" stroke="#888"><rect x="1" y=".5" width="4" height="5" rx="2"/><rect x="1" y="8.500" width="4" height="5" rx="2"/><path d="M3 4v6"/></svg>
   </div>
  </aside>
 </div>

 <footer class="status d-flex align-items-center flex-shrink-0">
  <button aria-label="First page"><svg width="10" height="9"><path fill="#ddd" d="M0 0h1v9H0zM10 0v9L2 4.500z"/></svg></button><button class="ms-2" aria-label="Previous page"><svg width="10" height="9"><path fill="#ddd" d="M9 0v9L1 4.500z"/></svg></button>
  <span class="text-center text-white" style="width:88px">2 of 4</span>
  <button aria-label="Next page"><svg width="10" height="9"><path fill="#ddd" d="M1 0v9l8-4.500z"/></svg></button><button class="ms-2" aria-label="Last page"><svg width="10" height="9"><path fill="#ddd" d="M9 0h1v9H9zM0 0v9l8-4.500z"/></svg></button>
  <svg class="ms-2" width="12" height="13" fill="none" stroke="#ddd"><path d="M.5.500h8v10h-8zM10.500 2v10H3M2 3h5M2 5h5M2 7h5"/></svg>
  <svg class="ms-3 me-3" width="12" height="11"><path fill="#777" d="M2 9V4c0-5 8-5 8 0v5zM0 9h12v2H0z"/></svg>
  <span class="text-nowrap"><b>Drag</b> to create a new Rectangle shape, +<b>Shift</b> to constrain proportions, +<b>Ctrl</b> to create from centre point, +<b>RightMouse</b> to create along line, +<b>Alt</b> to ignore snapping. <b>Click</b> to select a shape to change the shape's parameters, +<b>Shift</b> to toggle select.</span>
 </footer>
 <div class="taskbar d-flex flex-shrink-0"><span style="width:48px"></span><span style="width:343px;background:#2b2b2b;border-top:1px solid #666"></span><span style="width:48px;background:#a8602a;margin-left:443px"></span><span style="width:48px;background:#4c4d50;margin-left:148px"></span><span class="ms-auto text-white" style="margin-right:75px">16:23</span></div>
</div>

<script src="https://cdn.jsdelivr.net/npm/bootstrap@5.3.0/dist/js/bootstrap.bundle.min.js"></script>
<script>
// ruler ticks: every 5 document pixels, longer at 20 and 100
const zoom = 1.006;
function ruler(el, origin, from, to, vertical) {
  let d = '', t = '', depth = vertical ? 19 : 22;
  for (let u = from; u <= to; u += 5) {
    const p = Math.round(origin + u * zoom) + 0.5;
    const len = u % 100 === 0 ? 8 : u % 20 === 0 ? 4 : 2;
    d += vertical ? `M${depth - len} ${p}H${depth}` : `M${p} ${depth - len}V${depth}`;
    if (u % 100 === 0 && u >= 0) {
      t += vertical ? `<text transform="translate(10 ${p}) rotate(-90)" text-anchor="middle">${u}</text>`
                    : `<text x="${p}" y="11" text-anchor="middle">${u}</text>`;
    }
  }
  el.insertAdjacentHTML('beforeend', `<path d="${d}"/>${t}`);
}
ruler(document.getElementById('hr'), 53, -30, 1960, false);
ruler(document.getElementById('vr'), 59, -55, 1130, true);
// grey palette, black to white
const g = document.getElementById('greys');
for (let i = 0; i <= 20; i++) {
  const v = Math.round(i * 12.75);
  g.insertAdjacentHTML('beforeend', `<i class="sw" style="background:rgb(${v},${v},${v})"></i>`);
}
</script>
</body>
</html>
